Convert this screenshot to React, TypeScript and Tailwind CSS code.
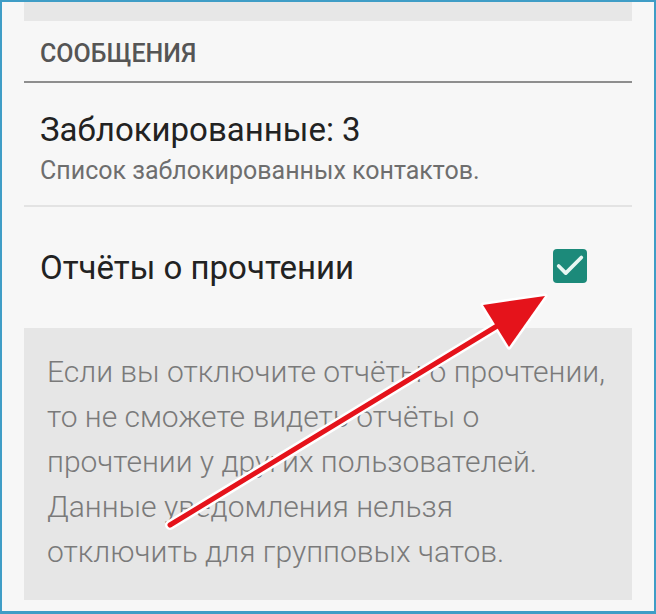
import { Check } from "lucide-react";

const note = [
  "Если вы отключите отчёты о прочтении,",
  "то не сможете видеть отчёты о",
  "прочтении у других пользователей.",
  "Данные уведомления нельзя",
  "отключить для групповых чатов.",
];

function Arrow() {
  return (
    <svg className="pointer-events-none absolute left-0 top-0" width="656" height="614" viewBox="0 0 656 614">
      {/* white halo first, red on top */}
      <line x1="168" y1="523" x2="505" y2="318" stroke="#ffffff" strokeWidth="10" strokeLinecap="round" />
      <polygon points="543,294 481,303 507,345" fill="#ffffff" stroke="#ffffff" strokeWidth="5" strokeLinejoin="round" />
      <line x1="168" y1="523" x2="505" y2="318" stroke="#e5131b" strokeWidth="5" strokeLinecap="round" />
      <polygon points="543,294 481,303 507,345" fill="#e5131b" />
    </svg>
  );
}

export default function App() {
  return (
    <div className="relative h-[614px] w-[656px] overflow-hidden border-x-2 border-t-2 border-b-[3px] border-[#3f9dc6] bg-[#f7f7f7] font-['Roboto',sans-serif]">
      <div className="mx-[22px]">
        <div className="h-[19px] bg-[#e7e7e7]" />

        {/* section header */}
        <p className="mt-[19px] px-[16px] text-[25px] font-medium leading-[28px] text-[#555555]">
          СООБЩЕНИЯ
        </p>
        <div className="mt-[13px] h-[2px] bg-[#8e8e8e]" />

        {/* blocked */}
        <div className="px-[16px]">
          <p className="mt-[28px] text-[33px] leading-[38px] text-[#222222]">Заблокированные: 3</p>
          <p className="mt-[8px] text-[25px] leading-[28px] text-[#6e6e6e]">Список заблокированных контактов.</p>
        </div>
        <div className="mt-[20px] h-[2px] bg-[#e3e3e3]" />

        {/* read receipts */}
        <div className="mt-[42px] flex items-start justify-between pl-[16px] pr-[45px]">
          <p className="text-[33px] leading-[38px] text-[#222222]">Отчёты о прочтении</p>
          <div className="flex h-[34px] w-[34px] items-center justify-center rounded-[4px] bg-[#1c8a7a]">
            <Check className="h-[34px] w-[34px] text-[#e8f7f3]" strokeWidth={2.6} />
          </div>
        </div>

        {/* info box */}
        <div className="mt-[41px] h-[272px] bg-[#e6e6e6] px-[23px] pt-[21px]">
          {note.map((line) => (
            <p key={line} className="whitespace-nowrap text-[30px] font-light leading-[45px] text-[#7a7a7a]">
              {line}
            </p>
          ))}
        </div>
      </div>

      <Arrow />
    </div>
  );
}
